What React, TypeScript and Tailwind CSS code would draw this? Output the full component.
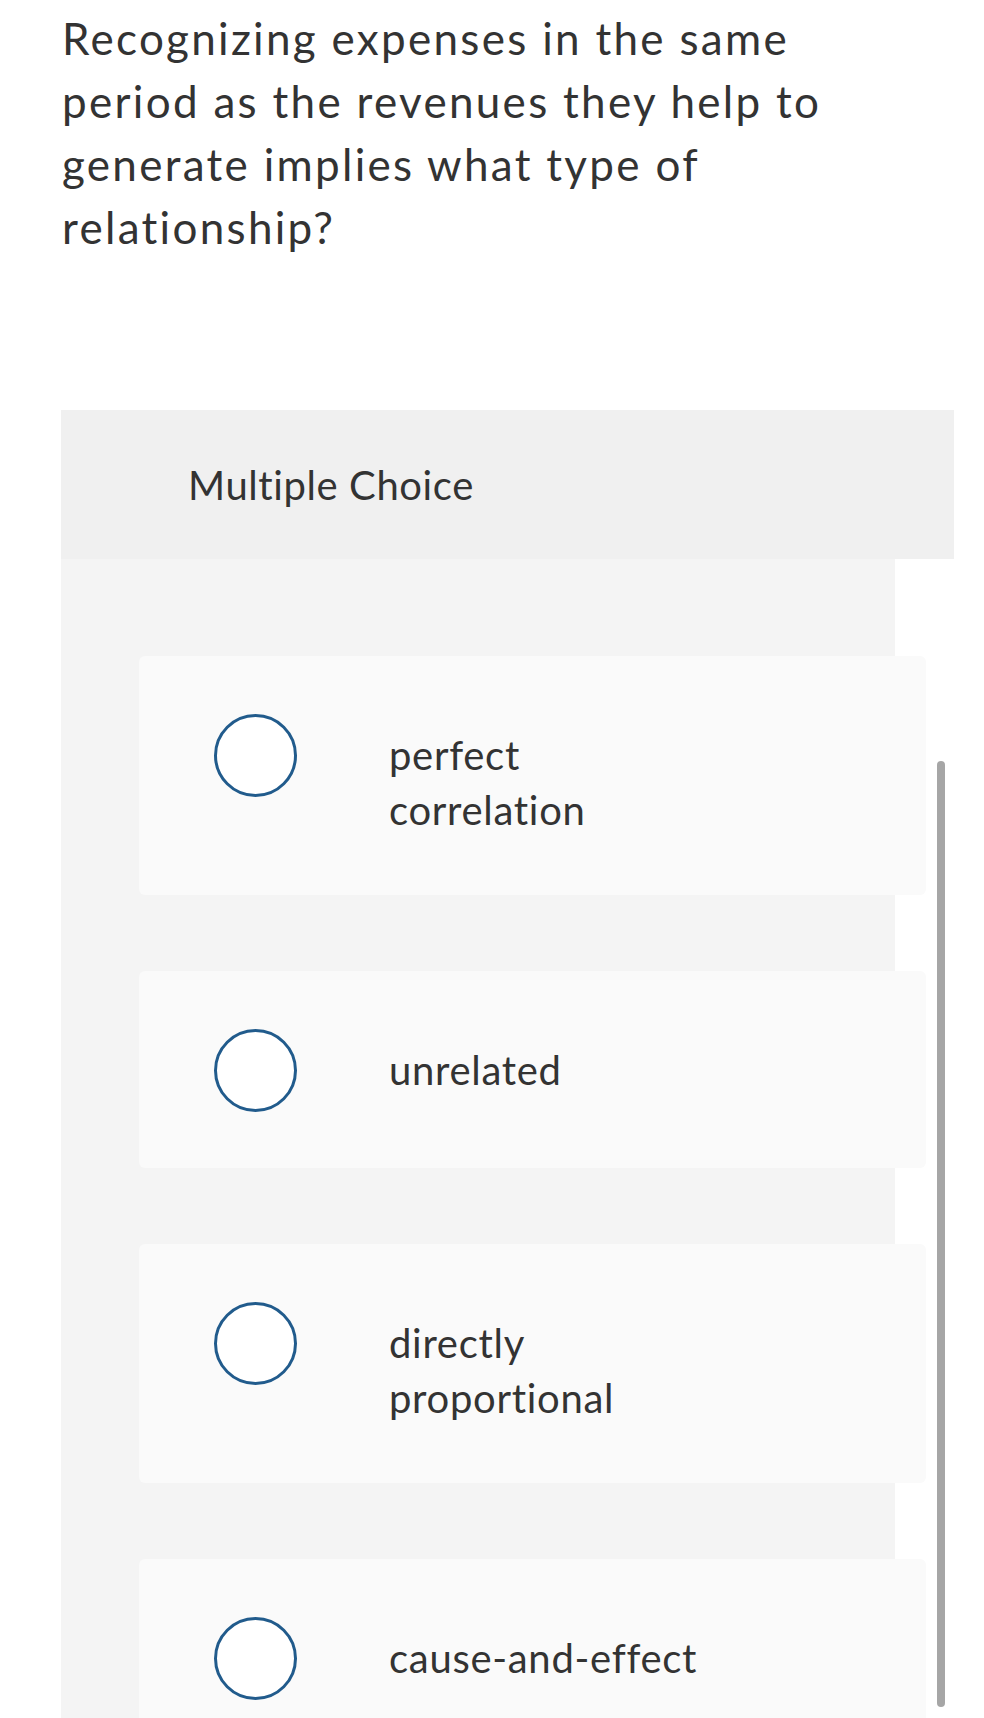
import React from 'react';

const options = [
  { text: ['perfect', 'correlation'], h: 'h-[239px]' },
  { text: ['unrelated'], h: 'h-[197px]' },
  { text: ['directly', 'proportional'], h: 'h-[239px]' },
  { text: ['cause-and-effect'], h: 'h-[239px]' },
];

const Radio = () => (
  <div className="h-[55px] flex items-center shrink-0">
    <div className="w-[83px] h-[83px] rounded-full border-[3px] border-[#215b8c] bg-white" />
  </div>
);

export default function App() {
  return (
    <div
      className="relative w-[984px] h-[1718px] overflow-hidden bg-white text-[#333333]"
      style={{ fontFamily: 'Lato, "Open Sans", sans-serif' }}
    >
      <div className="pl-[62px] pt-[7px]">
        <p className="text-[44px] leading-[63px] tracking-[2.3px]">
          Recognizing expenses in the same
          <br />
          period as the revenues they help to
          <br />
          generate implies what type of
          <br />
          relationship?
        </p>
      </div>

      <div className="ml-[61px] mt-[151px] w-[893px]">
        {/* Header */}
        <div className="h-[149px] bg-[#f0f0f0] flex items-center pl-[127px]">
          <span className="text-[40px] tracking-[0.6px]">Multiple Choice</span>
        </div>

        {/* Body */}
        <div className="w-[834px] bg-[#f4f4f4] pt-[97px] pb-[200px] pl-[78px] flex flex-col gap-[76px]">
          {options.map((o, i) => (
            <div key={i} className={`w-[787px] ${o.h} bg-[#fafafa] rounded-md pt-[72px] pl-[75px] flex items-start gap-[92px]`}>
              <Radio />
              <div className="text-[40px] leading-[55px] tracking-[0.7px]">
                {o.text.map((t) => (
                  <div key={t}>{t}</div>
                ))}
              </div>
            </div>
          ))}
        </div>
      </div>

      {/* scrollbar */}
      <div className="absolute left-[937px] top-[761px] w-[8px] h-[946px] rounded-full bg-[#a6a6a6]" />
    </div>
  );
}
